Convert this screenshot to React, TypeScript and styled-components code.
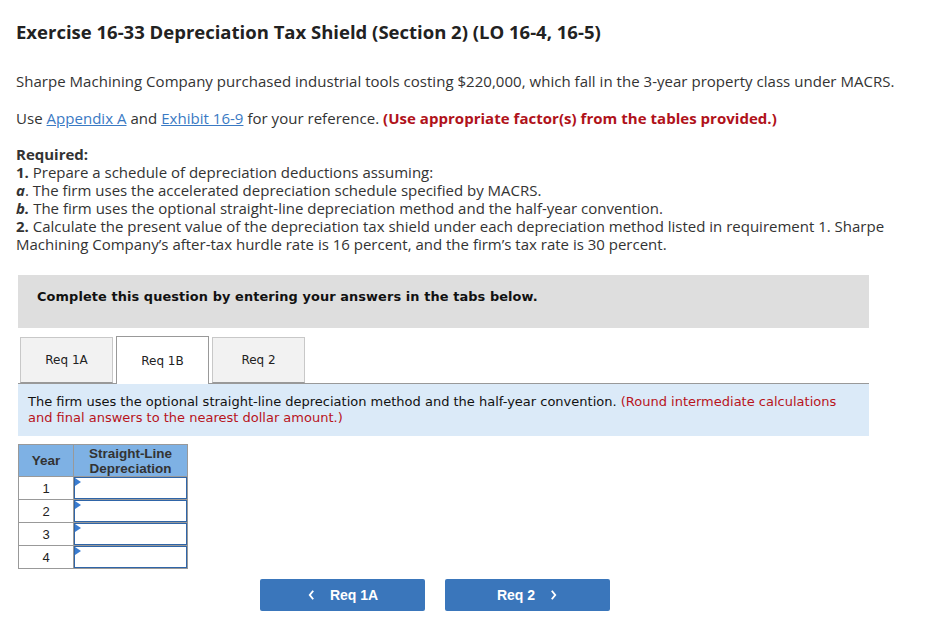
import React, { useState } from "react";
import styled, { createGlobalStyle } from "styled-components";

const GlobalStyle = createGlobalStyle`
	body {
		margin: 0;
		background: #fff;
		font-family: "Open Sans", "Liberation Sans", sans-serif;
		color: #222;
	}
`;

const rows = [1, 2, 3, 4];

export default function App() {
	const [tab, setTab] = useState(1);
	const tabs = ["Req 1A", "Req 1B", "Req 2"];

	return (
		<Page>
			<GlobalStyle />
			<Title>Exercise 16-33 Depreciation Tax Shield (Section 2) (LO 16-4, 16-5)</Title>
			<Para>
				Sharpe Machining Company purchased industrial tools costing $220,000, which fall in the
				3-year property class under MACRS.
			</Para>
			<Para>
				Use <Link href="#">Appendix A</Link> and <Link href="#">Exhibit 16-9</Link> for your
				reference. <Warn>(Use appropriate factor(s) from the tables provided.)</Warn>
			</Para>
			<Required>
				<b>Required:</b>
				<br />
				<b>1.</b> Prepare a schedule of depreciation deductions assuming:
				<br />
				<b>
					<i>a</i>
				</b>
				. The firm uses the accelerated depreciation schedule specified by MACRS.
				<br />
				<b>
					<i>b.</i>
				</b>{" "}
				The firm uses the optional straight-line depreciation method and the half-year convention.
				<br />
				<b>2.</b> Calculate the present value of the depreciation tax shield under each depreciation
				method listed in requirement 1. Sharpe Machining Company’s after-tax hurdle rate is 16
				percent, and the firm’s tax rate is 30 percent.
			</Required>

			<Notice>Complete this question by entering your answers in the tabs below.</Notice>

			<TabBar>
				{tabs.map((t, i) => (
					<Tab key={t} active={i === tab} onClick={() => setTab(i)}>
						{t}
					</Tab>
				))}
			</TabBar>
			<Info>
				The firm uses the optional straight-line depreciation method and the half-year convention.{" "}
				<InfoRed>(Round intermediate calculations and final answers to the nearest dollar amount.)</InfoRed>
			</Info>

			<Table>
				<colgroup>
					<col style={{ width: 55 }} />
					<col style={{ width: 114 }} />
				</colgroup>
				<thead>
					<tr>
						<Th>Year</Th>
						<Th>
							Straight-Line
							<br />
							Depreciation
						</Th>
					</tr>
				</thead>
				<tbody>
					{rows.map((r) => (
						<tr key={r}>
							<YearCell>{r}</YearCell>
							<InputCell>
								<Marker />
								<CellInput type="text" />
							</InputCell>
						</tr>
					))}
				</tbody>
			</Table>

			<NavRow>
				<NavButton>
					<Chevron viewBox="0 0 10 14">
						<path d="M7 2 L3 7 L7 12" />
					</Chevron>
					Req 1A
				</NavButton>
				<NavButton>
					Req 2
					<Chevron viewBox="0 0 10 14">
						<path d="M3 2 L7 7 L3 12" />
					</Chevron>
				</NavButton>
			</NavRow>
		</Page>
	);
}

const Page = styled.div`
	width: 931px;
	padding: 20px 0 0 16px;
	box-sizing: border-box;
`;

const Title = styled.h1`
	margin: 0 0 27px;
	font-size: 18.5px;
	font-weight: 700;
	color: #222;
	line-height: 24px;
`;

const Para = styled.p`
	margin: 0 0 17px;
	font-size: 15px;
	line-height: 20px;
	color: #333;
	letter-spacing: 0.03px;
`;

const Link = styled.a`
	color: #3a7ac4;
	text-decoration: underline;
`;

const Warn = styled.b`
	color: #b0121a;
`;

const Required = styled.div`
	margin-top: 0;
	font-size: 15px;
	line-height: 18px;
	color: #333;
	width: 880px;
`;

const Notice = styled.div`
	margin: 22px 0 0 2px;
	width: 851px;
	height: 53px;
	background: #dedede;
	box-sizing: border-box;
	padding: 14px 0 0 19px;
	font-family: "DejaVu Sans", Verdana, sans-serif;
	font-weight: 700;
	font-size: 12.9px;
	color: #111;
	letter-spacing: 0.1px;
`;

const TabBar = styled.div`
	display: flex;
	align-items: flex-end;
	gap: 3px;
	margin: 8px 0 0 2px;
	width: 851px;
	border-bottom: 1px solid #999;
	padding-left: 2px;
	box-sizing: border-box;
	height: 48px;
`;

const Tab = styled.button<{ active: boolean }>`
	width: 93px;
	height: ${(p) => (p.active ? "48px" : "46px")};
	margin-bottom: ${(p) => (p.active ? "-1px" : "0")};
	background: ${(p) => (p.active ? "#fff" : "#f2f2f2")};
	border: 1px solid ${(p) => (p.active ? "#999" : "#c8c8c8")};
	border-bottom: ${(p) => (p.active ? "none" : "1px solid #999")};
	font-family: "DejaVu Sans", Verdana, sans-serif;
	font-size: 12px;
	color: #222;
	padding: 0;
	cursor: pointer;
`;

const Info = styled.div`
	margin-left: 2px;
	width: 851px;
	height: 52px;
	box-sizing: border-box;
	background: #dbeaf8;
	padding: 10px 26px 0 10px;
	font-family: "DejaVu Sans", Verdana, sans-serif;
	font-size: 13px;
	line-height: 16px;
	color: #111;
`;

const InfoRed = styled.span`
	color: #b8141c;
`;

const Table = styled.table`
	margin: 8px 0 0 2px;
	border-collapse: collapse;
	table-layout: fixed;
	font-family: "Liberation Sans", Arial, sans-serif;
	font-size: 13px;
	color: #222;
`;

const Th = styled.th`
	background: #7eb1e4;
	border: 1px solid #999;
	height: 31px;
	padding: 0 2px;
	font-weight: 700;
	font-size: 13.5px;
	line-height: 15px;
	color: #333;
`;

const YearCell = styled.td`
	border: 1px solid #999;
	text-align: center;
	height: 22px;
	padding: 0;
`;

const InputCell = styled.td`
	position: relative;
	border: 1px solid #999;
	padding: 0;
	height: 22px;
`;

const Marker = styled.span`
	position: absolute;
	left: 1px;
	top: 1px;
	width: 0;
	height: 0;
	border-top: 4px solid transparent;
	border-bottom: 4px solid transparent;
	border-left: 6px solid #3a7cd0;
`;

const CellInput = styled.input`
	display: block;
	width: 100%;
	height: 22px;
	box-sizing: border-box;
	border: 1.5px solid #2f65a8;
	background: #fff;
	outline: none;
`;

const NavRow = styled.div`
	display: flex;
	gap: 20px;
	margin: 10px 0 0 244px;
`;

const NavButton = styled.button`
	display: flex;
	align-items: center;
	justify-content: center;
	gap: 14px;
	width: 165px;
	height: 32px;
	background: #3a76bb;
	border: none;
	border-radius: 2px;
	color: #fff;
	font-family: "Liberation Sans", Arial, sans-serif;
	font-weight: 700;
	font-size: 14px;
	cursor: pointer;
`;

const Chevron = styled.svg`
	width: 9px;
	height: 12px;
	fill: none;
	stroke: #fff;
	stroke-width: 2.2;
`;
